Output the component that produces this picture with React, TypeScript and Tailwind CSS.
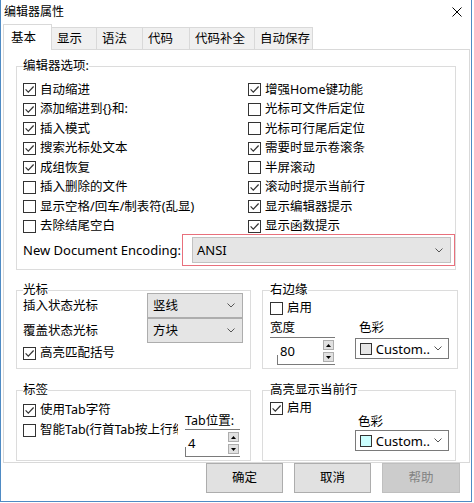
import React from "react"

function Box({ checked }: { checked?: boolean }) {
  return (
    <svg width="13" height="13" viewBox="0 0 13 13" className="shrink-0">
      <rect x="0.5" y="0.5" width="12" height="12" fill="white" stroke="#333" />
      {checked && (
        <path d="M2.6 6.4l2.7 2.8 5.3-5.7" fill="none" stroke="#333" strokeWidth="1.2" />
      )}
    </svg>
  )
}

function Cb({ label, checked, tall }: { label: string; checked?: boolean; tall?: boolean }) {
  return (
    <div className={`flex items-center gap-[4px] whitespace-nowrap ${tall ? "h-[20px]" : "h-[19.5px]"}`}>
      <Box checked={checked} />
      <span>{label}</span>
    </div>
  )
}

function Chevron() {
  return (
    <svg width="8" height="5" viewBox="0 0 8 5" className="shrink-0">
      <path d="M0.5 0.5l3.5 3.5 3.5-3.5" fill="none" stroke="#555" />
    </svg>
  )
}

function Arrow({ up }: { up?: boolean }) {
  return (
    <div className="w-[11px] h-[10px] bg-[#e1e1e1] border border-[#adadad] flex items-center justify-center">
      <svg width="5" height="3" viewBox="0 0 5 3">
        <path d={up ? "M0 3L2.5 0L5 3z" : "M0 0L2.5 3L5 0z"} fill="#000" />
      </svg>
    </div>
  )
}

function Spin({ value, outer, inner }: { value: string; outer: string; inner: string }) {
  return (
    <div className={`${outer} h-[28px] border-t border-[#7a7a7a] flex`}>
      <div className={`${inner} flex-1 flex border-b border-[#7a7a7a]`}>
        <div className="self-end h-[9px] border-l border-[#7a7a7a]" />
        <span className="flex-1 pl-[2px] pt-[5px] text-[13px] leading-[16px]">{value}</span>
        <div className="flex flex-col gap-[2px] pt-[2px] pr-[1px]">
          <Arrow up />
          <Arrow />
        </div>
      </div>
    </div>
  )
}

function Sel({ text }: { text: string }) {
  return (
    <div className="w-[96px] h-[25px] bg-[#e5e5e5] border border-[#adadad] flex items-center justify-between pl-[5px] pr-[7px]">
      <span>{text}</span>
      <Chevron />
    </div>
  )
}

function ColorSel({ swatch }: { swatch: string }) {
  return (
    <div className="w-[94px] h-[21px] border border-[#7a7a7a] bg-white flex items-center pl-[4px] pr-[6px] gap-[4px]">
      <div className={`w-[12px] h-[12px] border border-[#333] ${swatch}`} />
      <span className="text-[13px] flex-1">Custom..</span>
      <Chevron />
    </div>
  )
}

const tabs = [
  { t: "基本", cls: "w-[49px] h-[26px] -mb-px pl-[7px] bg-white border-x border-t relative z-10" },
  { t: "显示", cls: "w-[45px] h-[22px] pl-[5px] bg-[#f0f0f0] border-t border-r" },
  { t: "语法", cls: "w-[46px] h-[22px] pl-[5px] bg-[#f0f0f0] border-t border-r" },
  { t: "代码", cls: "w-[47px] h-[22px] pl-[5px] bg-[#f0f0f0] border-t border-r" },
  { t: "代码补全", cls: "w-[65px] h-[22px] pl-[5px] bg-[#f0f0f0] border-t border-r" },
  { t: "自动保存", cls: "w-[58px] h-[22px] pl-[5px] bg-[#f0f0f0] border-t border-r" },
]

const leftOpts: [string, boolean][] = [
  ["自动缩进", true],
  ["添加缩进到{}和:", true],
  ["插入模式", true],
  ["搜索光标处文本", true],
  ["成组恢复", true],
  ["插入删除的文件", false],
  ["显示空格/回车/制表符(乱显)", false],
  ["去除结尾空白", false],
]

const rightOpts: [string, boolean][] = [
  ["增强Home键功能", true],
  ["光标可文件后定位", false],
  ["光标可行尾后定位", false],
  ["需要时显示卷滚条", true],
  ["半屏滚动", false],
  ["滚动时提示当前行", true],
  ["显示编辑器提示", true],
  ["显示函数提示", true],
]

export default function App() {
  return (
    <div className="w-[474px] h-[503px] bg-white overflow-hidden font-['Noto_Sans','Noto_Sans_CJK_SC',sans-serif] text-[12.5px] leading-[16px] text-black">
      <div className="w-[472px] h-[502px] border-x border-b border-[#4f8bc4] flex flex-col">
        {/* Title bar */}
        <div className="h-[24px] shrink-0 flex items-center justify-between pl-[3px] pr-[9px]">
          <span className="text-[12px]">编辑器属性</span>
          <svg width="10" height="10" viewBox="0 0 10 10">
            <path d="M0.5 0.5l9 9M9.5 0.5l-9 9" stroke="#000" strokeWidth="1" />
          </svg>
        </div>

        {/* Tabs */}
        <div className="h-[25px] shrink-0 flex items-end pl-[2px]">
          {tabs.map((tab) => (
            <div key={tab.t} className={`${tab.cls} border-[#d9d9d9] flex items-center`}>
              {tab.t}
            </div>
          ))}
        </div>

        {/* Tab panel */}
        <div className="ml-[2px] w-[467px] h-[414px] shrink-0 border border-[#d9d9d9] pl-[12px] flex flex-col">
          <fieldset className="mt-[8px] w-[440px] h-[212px] border border-[#dcdcdc] pl-[6px]">
            <legend className="leading-[16px]">编辑器选项:</legend>
            <div className="flex pt-[6px]">
              <div className="w-[225px]">
                {leftOpts.map(([l, c]) => (
                  <Cb key={l} label={l} checked={c} />
                ))}
              </div>
              <div>
                {rightOpts.map(([l, c]) => (
                  <Cb key={l} label={l} checked={c} />
                ))}
              </div>
            </div>
            <div className="flex items-center -mt-[2px]">
              <span className="w-[159px] text-[13px]">New Document Encoding:</span>
              <div className="flex-1 border border-[#e8707c] pl-[9px] pr-[3px] py-[2px]">
                <div className="h-[26px] bg-[#e5e5e5] border border-[#c2c2c2] flex items-center justify-between pl-[4px] pr-[7px] text-[13px]">
                  <span>ANSI</span>
                  <Chevron />
                </div>
              </div>
            </div>
          </fieldset>

          <div className="flex mt-[12px] h-[87px]">
            <fieldset className="w-[235px] h-full border border-[#dcdcdc] pl-[6px]">
              <legend className="leading-[16px]">光标</legend>
              <div className="-mt-[5px]">
                <div className="flex items-center h-[25px]">
                  <span className="w-[124px]">插入状态光标</span>
                  <Sel text="竖线" />
                </div>
                <div className="flex items-center h-[25px]">
                  <span className="w-[124px]">覆盖状态光标</span>
                  <Sel text="方块" />
                </div>
                <Cb label="高亮匹配括号" checked tall />
              </div>
            </fieldset>
            <fieldset className="ml-[11px] w-[196px] h-full border border-[#dcdcdc] pl-[7px]">
              <legend className="leading-[16px]">右边缘</legend>
              <Cb label="启用" tall />
              <div className="flex">
                <div className="w-[85px]">
                  <div className="h-[19px] leading-[19px]">宽度</div>
                  <Spin value="80" outer="w-[65px]" inner="ml-[7px]" />
                </div>
                <div>
                  <div className="h-[20px] leading-[20px] pl-[4px]">色彩</div>
                  <ColorSel swatch="bg-[#e6e6e6]" />
                </div>
              </div>
            </fieldset>
          </div>

          <div className="flex mt-[13px] h-[79px]">
            <fieldset className="w-[235px] h-full border border-[#dcdcdc] pl-[6px]">
              <legend className="leading-[16px]">标签</legend>
              <div className="flex">
                <div className="w-[155px] overflow-hidden pt-[2px]">
                  <Cb label="使用Tab字符" checked tall />
                  <Cb label="智能Tab(行首Tab按上行缩进)" tall />
                </div>
                <div className="ml-[7px] pt-[15px]">
                  <div className="h-[16px]">Tab位置:</div>
                  <Spin value="4" outer="w-[55px]" inner="" />
                </div>
              </div>
            </fieldset>
            <fieldset className="ml-[11px] w-[194px] h-full border border-[#dcdcdc] pl-[7px]">
              <legend className="leading-[16px]">高亮显示当前行</legend>
              <Cb label="启用" checked tall />
              <div className="ml-[85px] -mt-[4px]">
                <div className="h-[16px] pl-[3px]">色彩</div>
                <ColorSel swatch="bg-[#ccffff]" />
              </div>
            </fieldset>
          </div>
        </div>

        {/* Buttons */}
        <div className="flex justify-end gap-[11px] pr-[11px]">
          <div className="w-[77px] h-[30px] bg-[#e1e1e1] border border-[#adadad] flex items-center justify-center">确定</div>
          <div className="w-[77px] h-[30px] bg-[#e1e1e1] border border-[#adadad] flex items-center justify-center">取消</div>
          <div className="w-[78px] h-[30px] bg-[#cccccc] border border-[#bfbfbf] text-[#838383] flex items-center justify-center">帮助</div>
        </div>
      </div>
    </div>
  )
}
